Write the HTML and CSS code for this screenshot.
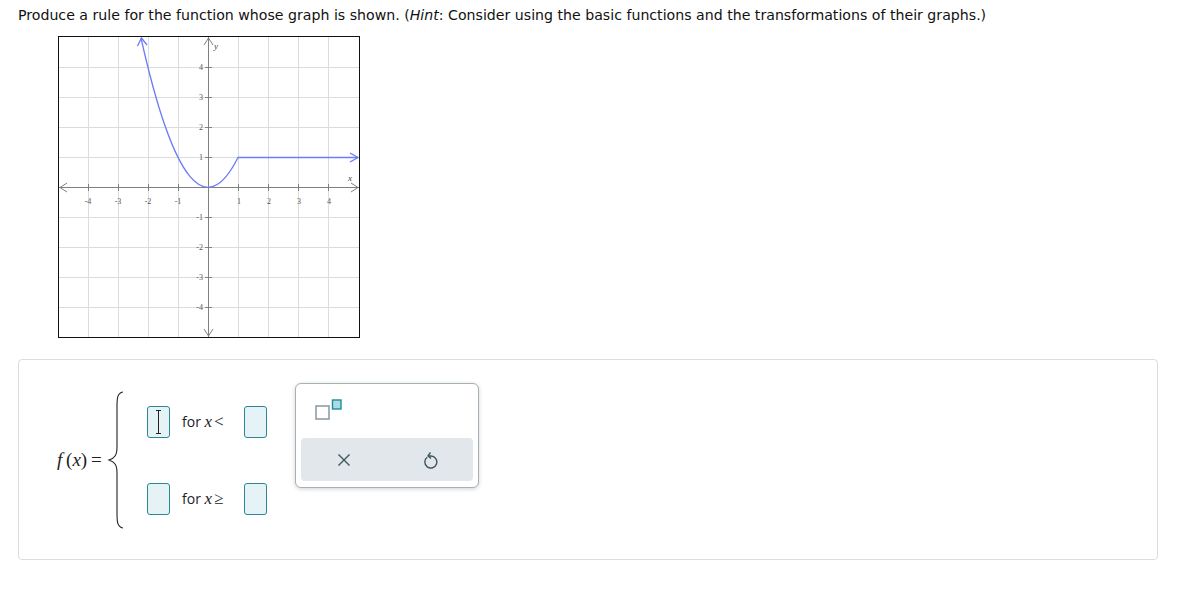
FILE: index.html
```html
<!DOCTYPE html>
<html>
<head>
<meta charset="utf-8">
<link rel="stylesheet" href="styles.css">
</head>
<body>
<p class="question">Produce a rule for the function whose graph is shown. (<i>Hint</i>: Consider using the basic functions and the transformations of their graphs.)</p>
<div class="graph">
<svg width="302" height="302" viewBox="0 0 302 302" xmlns="http://www.w3.org/2000/svg">
  <rect x="0.5" y="0.5" width="301" height="301" fill="#fff" stroke="none"/>
  <g stroke="#dcdcdc" stroke-width="1">
    <line x1="30.5" y1="1" x2="30.5" y2="301"/>
    <line x1="60.5" y1="1" x2="60.5" y2="301"/>
    <line x1="90.5" y1="1" x2="90.5" y2="301"/>
    <line x1="120.5" y1="1" x2="120.5" y2="301"/>
    <line x1="180.5" y1="1" x2="180.5" y2="301"/>
    <line x1="210.5" y1="1" x2="210.5" y2="301"/>
    <line x1="240.5" y1="1" x2="240.5" y2="301"/>
    <line x1="270.5" y1="1" x2="270.5" y2="301"/>
    <line x1="1" y1="31.5" x2="301" y2="31.5"/>
    <line x1="1" y1="61.5" x2="301" y2="61.5"/>
    <line x1="1" y1="91.5" x2="301" y2="91.5"/>
    <line x1="1" y1="121.5" x2="301" y2="121.5"/>
    <line x1="1" y1="181.5" x2="301" y2="181.5"/>
    <line x1="1" y1="211.5" x2="301" y2="211.5"/>
    <line x1="1" y1="241.5" x2="301" y2="241.5"/>
    <line x1="1" y1="271.5" x2="301" y2="271.5"/>
  </g>
  <g stroke="#808080" stroke-width="1" fill="none">
    <line x1="1" y1="151.5" x2="301" y2="151.5"/>
    <line x1="150.5" y1="1" x2="150.5" y2="301"/>
    <polyline points="9,147 2,151.5 9,156"/>
    <polyline points="293,147 300,151.5 293,156"/>
    <polyline points="146,9 150.5,2 155,9"/>
    <polyline points="146,293 150.5,300 155,293"/>
    <line x1="30.5" y1="148" x2="30.5" y2="155"/>
    <line x1="60.5" y1="148" x2="60.5" y2="155"/>
    <line x1="90.5" y1="148" x2="90.5" y2="155"/>
    <line x1="120.5" y1="148" x2="120.5" y2="155"/>
    <line x1="180.5" y1="148" x2="180.5" y2="155"/>
    <line x1="210.5" y1="148" x2="210.5" y2="155"/>
    <line x1="240.5" y1="148" x2="240.5" y2="155"/>
    <line x1="270.5" y1="148" x2="270.5" y2="155"/>
    <line x1="147" y1="31.5" x2="154" y2="31.5"/>
    <line x1="147" y1="61.5" x2="154" y2="61.5"/>
    <line x1="147" y1="91.5" x2="154" y2="91.5"/>
    <line x1="147" y1="121.5" x2="154" y2="121.5"/>
    <line x1="147" y1="181.5" x2="154" y2="181.5"/>
    <line x1="147" y1="211.5" x2="154" y2="211.5"/>
    <line x1="147" y1="241.5" x2="154" y2="241.5"/>
    <line x1="147" y1="271.5" x2="154" y2="271.5"/>
  </g>
  <g class="ticklbl" text-anchor="middle">
    <text x="30" y="168">-4</text>
    <text x="60" y="168">-3</text>
    <text x="90" y="168">-2</text>
    <text x="120" y="168">-1</text>
    <text x="181" y="168">1</text>
    <text x="211" y="168">2</text>
    <text x="241" y="168">3</text>
    <text x="271" y="168">4</text>
  </g>
  <g class="ticklbl" text-anchor="end">
    <text x="145" y="34">4</text>
    <text x="145" y="64">3</text>
    <text x="145" y="94">2</text>
    <text x="145" y="124">1</text>
    <text x="145" y="184">-1</text>
    <text x="145" y="214">-2</text>
    <text x="145" y="244">-3</text>
    <text x="145" y="274">-4</text>
  </g>
  <text class="axlbl" x="156" y="13">y</text>
  <text class="axlbl" x="290" y="145">x</text>
  <g stroke="#6a7cf6" stroke-width="1.3" fill="none">
    <path d="M83,2 Q131.5,218 180,121.5 L300,121.5"/>
    <polyline points="79.5,10 83.5,2 89,9"/>
    <polyline points="292,117 300,121.5 292,126"/>
  </g>
  <rect x="0.5" y="0.5" width="301" height="301" fill="none" stroke="#111" stroke-width="1"/>
</svg>
</div>

<div class="answer">
  <div class="piecewise">
    <div class="fx"><i>f</i>&thinsp;(<i>x</i>)&thinsp;=</div>
    <svg class="brace" width="18" height="138" viewBox="0 0 18 138" xmlns="http://www.w3.org/2000/svg">
      <path d="M16,1 C10,2 10,8 10,16 L10,56 C10,64 8,67 2,69 C8,71 10,74 10,82 L10,122 C10,130 10,136 16,137" fill="none" stroke="#222" stroke-width="1.1"/>
    </svg>
    <div class="rows">
      <div class="row">
        <span class="box cursor"><span class="ibeam"></span></span>
        <span class="cond">for <i class="var">x</i><span class="rel">&lt;</span></span>
        <span class="box"></span>
      </div>
      <div class="row">
        <span class="box"></span>
        <span class="cond">for <i class="var">x</i><span class="rel">&ge;</span></span>
        <span class="box"></span>
      </div>
    </div>
  </div>
  <div class="toolbar">
    <div class="tool-top">
      <svg width="28" height="22" viewBox="0 0 28 22" xmlns="http://www.w3.org/2000/svg">
        <rect x="1" y="7" width="13" height="13" fill="#fff" stroke="#8f9ea4" stroke-width="1.6"/>
        <rect x="17.5" y="1" width="8.5" height="9" fill="#a9dde6" stroke="#1f8a9a" stroke-width="1.4"/>
      </svg>
    </div>
    <div class="tool-bar">
      <svg width="14" height="14" viewBox="0 0 14 14" xmlns="http://www.w3.org/2000/svg">
        <path d="M1.5,1.5 L12.5,12.5 M12.5,1.5 L1.5,12.5" stroke="#3d555d" stroke-width="1.4" fill="none"/>
      </svg>
      <svg width="16" height="18" viewBox="0 0 16 18" xmlns="http://www.w3.org/2000/svg">
        <path d="M4.2,6.2 A6,6 0 1 0 8,5 L6,5" stroke="#3d555d" stroke-width="1.4" fill="none"/>
        <polyline points="7.5,1.5 5,4.8 8,7.5" stroke="#3d555d" stroke-width="1.4" fill="none"/>
      </svg>
    </div>
  </div>
</div>
</body>
</html>
```

FILE: styles.css
```css
html, body {
  margin: 0;
  padding: 0;
  background: #fff;
}
body {
  font-family: "DejaVu Sans", Verdana, sans-serif;
  color: #111;
}
.question {
  margin: 0;
  padding: 7px 0 0 18px;
  font-size: 14.15px;
  line-height: 17px;
  white-space: nowrap;
}
.graph {
  margin: 12px 0 0 58px;
  width: 302px;
  height: 302px;
}
.graph svg {
  display: block;
}
.ticklbl text {
  font-family: "Liberation Serif", serif;
  font-size: 8px;
  fill: #555;
}
.axlbl {
  font-family: "Liberation Serif", serif;
  font-style: italic;
  font-size: 9px;
  fill: #444;
}
.answer {
  margin: 21px 0 0 18px;
  width: 1138px;
  height: 199px;
  border: 1px solid #d9dedf;
  border-radius: 4px;
  display: flex;
  align-items: flex-start;
  box-sizing: content-box;
}
.piecewise {
  display: flex;
  align-items: center;
  margin: 31px 0 0 38px;
}
.fx {
  font-family: "Liberation Serif", "Times New Roman", serif;
  font-size: 19px;
  color: #222;
  width: 50px;
  white-space: nowrap;
}
.fx i {
  font-family: "Liberation Serif", "Times New Roman", serif;
  font-style: italic;
}
.brace {
  display: block;
}
.rows {
  display: flex;
  flex-direction: column;
  gap: 45px;
  margin-left: 22px;
}
.row {
  display: flex;
  align-items: center;
}
.box {
  display: block;
  width: 21px;
  height: 30px;
  border: 1px solid #2a8796;
  border-radius: 3px;
  background: #e5f3f7;
  position: relative;
}
.cond {
  font-family: "Open Sans", sans-serif;
  font-size: 14px;
  color: #222;
  width: 62px;
  padding-left: 12px;
  box-sizing: content-box;
  white-space: nowrap;
}
.cond .var {
  font-family: "Liberation Serif", "Times New Roman", serif;
  font-style: italic;
  font-size: 17px;
}
.cond .rel {
  font-family: "Liberation Serif", "Times New Roman", serif;
  font-size: 17px;
  margin-left: 2px;
}
.ibeam {
  position: absolute;
  left: 10px;
  top: 3px;
  width: 1px;
  height: 24px;
  background: #222;
}
.ibeam::before, .ibeam::after {
  content: "";
  position: absolute;
  left: -2px;
  width: 5px;
  height: 1px;
  background: #222;
}
.ibeam::before { top: 0; }
.ibeam::after { bottom: 0; }
.toolbar {
  margin: 23px 0 0 28px;
  width: 182px;
  height: 103px;
  border: 1px solid #a4b2b7;
  border-radius: 6px;
  box-shadow: 0 1px 4px rgba(0, 0, 0, 0.18);
  background: #fff;
  display: flex;
  flex-direction: column;
}
.tool-top {
  height: 54px;
  padding: 15px 0 0 19px;
  box-sizing: border-box;
}
.tool-top svg { display: block; }
.tool-bar {
  margin: 0 5px;
  height: 43px;
  border-radius: 4px;
  background: #e1e7ea;
  display: flex;
  align-items: center;
  gap: 72px;
  padding: 0 0 0 36px;
}
.tool-bar svg { display: block; }
```
